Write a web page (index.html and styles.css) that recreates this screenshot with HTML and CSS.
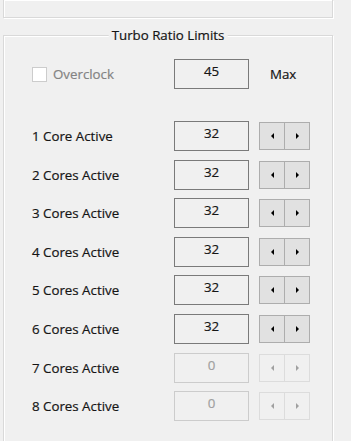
FILE: index.html
```html
<!DOCTYPE html>
<html>
	<head>
		<meta charset="UTF-8">
		<title>Turbo Ratio Limits</title>
		<link rel="stylesheet" href="styles.css">
	</head>
	<body>
		<div class="groupbox topbox"></div>
		<div class="groupbox turbo">
			<span class="grouptitle">Turbo Ratio Limits</span>
			<div class="headrow">
				<label class="check disabled"><span class="box"></span>Overclock</label>
				<div class="field">45</div>
				<span class="unit">Max</span>
			</div>
			<div class="rows">
				<div class="row">
					<span class="label">1 Core Active</span>
					<div class="field">32</div>
					<div class="spin"><span class="btn"><i class="left"></i></span><span class="btn"><i class="right"></i></span></div>
				</div>
				<div class="row">
					<span class="label">2 Cores Active</span>
					<div class="field">32</div>
					<div class="spin"><span class="btn"><i class="left"></i></span><span class="btn"><i class="right"></i></span></div>
				</div>
				<div class="row">
					<span class="label">3 Cores Active</span>
					<div class="field">32</div>
					<div class="spin"><span class="btn"><i class="left"></i></span><span class="btn"><i class="right"></i></span></div>
				</div>
				<div class="row">
					<span class="label">4 Cores Active</span>
					<div class="field">32</div>
					<div class="spin"><span class="btn"><i class="left"></i></span><span class="btn"><i class="right"></i></span></div>
				</div>
				<div class="row">
					<span class="label">5 Cores Active</span>
					<div class="field">32</div>
					<div class="spin"><span class="btn"><i class="left"></i></span><span class="btn"><i class="right"></i></span></div>
				</div>
				<div class="row">
					<span class="label">6 Cores Active</span>
					<div class="field">32</div>
					<div class="spin"><span class="btn"><i class="left"></i></span><span class="btn"><i class="right"></i></span></div>
				</div>
				<div class="row off">
					<span class="label">7 Cores Active</span>
					<div class="field">0</div>
					<div class="spin"><span class="btn"><i class="left"></i></span><span class="btn"><i class="right"></i></span></div>
				</div>
				<div class="row off">
					<span class="label">8 Cores Active</span>
					<div class="field">0</div>
					<div class="spin"><span class="btn"><i class="left"></i></span><span class="btn"><i class="right"></i></span></div>
				</div>
			</div>
		</div>
	</body>
</html>
```
FILE: styles.css
```css
* {
	margin: 0;
	padding: 0;
	box-sizing: border-box;
}
body {
	background-color: #f0f0f0;
	font-family: "Open Sans", "Noto Sans", sans-serif;
	font-size: 13.3px;
	color: #151515;
	-webkit-text-stroke: 0.2px;
	overflow: hidden;
}
.groupbox {
	width: 330px;
	margin-left: 3px;
	border: 1px solid #d9d9d9;
	box-shadow: 1px 1px 0 #fff, inset 1px 1px 0 #fff;
}
.topbox {
	height: 18px;
	border-top: none;
}
.turbo {
	position: relative;
	margin-top: 17px;
	padding: 23px 0 40px 28px;
}
.grouptitle {
	position: absolute;
	top: -10px;
	left: 50%;
	transform: translateX(-50%);
	padding: 0 3px;
	background-color: #f0f0f0;
	line-height: 18px;
	white-space: nowrap;
}
.headrow,
.row {
	display: flex;
	align-items: center;
	height: 30px;
}
.headrow {
	margin-bottom: 32px;
}
.check {
	display: flex;
	align-items: center;
	width: 142px;
}
.check .box {
	width: 15px;
	height: 15px;
	margin-right: 6px;
	background-color: #fff;
	border: 1px solid #cccccc;
}
.disabled {
	color: #838383;
}
.label {
	width: 142px;
}
.field {
	width: 75px;
	height: 30px;
	padding-top: 2px;
	line-height: 18px;
	text-align: center;
	border: 1px solid #7a7a7a;
	background-color: #f0f0f0;
}
.unit {
	margin-left: 21px;
}
.rows {
	display: flex;
	flex-direction: column;
	gap: 8.6px;
}
.spin {
	display: flex;
	margin-left: 10px;
}
.btn {
	display: flex;
	align-items: center;
	justify-content: center;
	width: 26px;
	height: 28px;
	background-color: #e1e1e1;
	border: 1px solid #adadad;
}
.btn + .btn {
	margin-left: -1px;
}
.btn i {
	width: 0;
	height: 0;
	border-top: 3px solid transparent;
	border-bottom: 3px solid transparent;
}
.btn .left {
	border-right: 3px solid #000;
}
.btn .right {
	border-left: 3px solid #000;
}
.off .field {
	color: #a0a0a0;
	border-color: #cccccc;
}
.off .btn {
	background-color: #f0f0f0;
	border-color: #dcdcdc;
}
.off .btn .left {
	border-right-color: #a0a0a0;
}
.off .btn .right {
	border-left-color: #a0a0a0;
}
```
